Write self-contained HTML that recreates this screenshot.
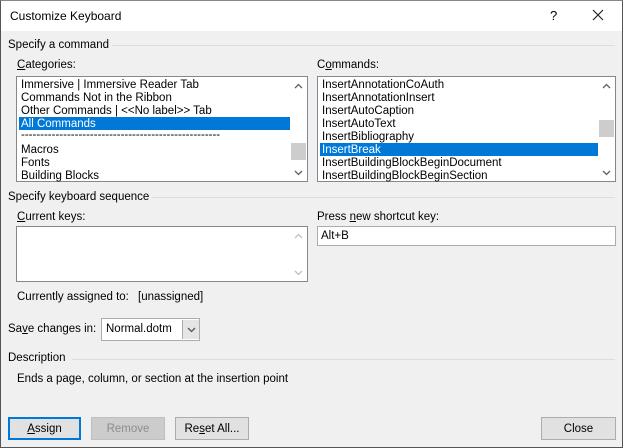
<!DOCTYPE html>
<html><head><style>
*{margin:0;padding:0;box-sizing:border-box}
body{width:623px;height:448px;overflow:hidden;background:#f0f0f0;font-family:"Liberation Sans",sans-serif;font-size:11.5px;color:#000;position:relative}
.a{position:absolute;white-space:nowrap}
.frame{position:absolute;left:0;top:0;width:623px;height:448px;border:1px solid #555;border-top-color:#888}
.title{position:absolute;left:1px;top:1px;width:621px;height:30px;background:#fff}
.lb{position:absolute;background:#fff;border:1px solid #828790}
.row{position:absolute;left:2px;height:13px;line-height:14px;padding-left:2px}
.sel{background:#0078d7;color:#fff}
.sb{position:absolute;right:0;top:0;bottom:0;width:17px;background:#fff}
.thumb{position:absolute;left:1px;width:15px;background:#cdcdcd}
.sb svg{position:absolute;left:4px}
.hr{position:absolute;height:1px;background:#dcdcdc}
.btn{position:absolute;top:417px;height:23px;border:1px solid #adadad;background:#e1e1e1;text-align:center;line-height:22px}
u{text-decoration:underline}
</style></head><body>
<div class="title"></div>
<div class="a" style="left:10px;top:9px;font-size:12px">Customize Keyboard</div>
<div class="a" style="left:550px;top:8px;font-size:13px">?</div>
<svg class="a" style="left:592px;top:9px" width="12" height="12"><path d="M1 1L11 11M11 1L1 11" stroke="#222" stroke-width="1.2"/></svg>

<div class="a" style="left:8px;top:39px">Specify a command</div>
<div class="hr" style="left:112px;top:45px;width:503px"></div>
<div class="a" style="left:17px;top:59px"><u>C</u>ategories:</div>
<div class="a" style="left:317px;top:59px">C<u>o</u>mmands:</div>

<div class="lb" style="left:16px;top:76px;width:292px;height:106px">
<div class="row" style="top:1px">Immersive | Immersive Reader Tab</div>
<div class="row" style="top:14px">Commands Not in the Ribbon</div>
<div class="row" style="top:27px">Other Commands | &lt;&lt;No label&gt;&gt; Tab</div>
<div class="row sel" style="top:40px;width:271px">All Commands</div>
<div class="row" style="top:51px">----------------------------------------------------</div>
<div class="row" style="top:66px">Macros</div>
<div class="row" style="top:79px">Fonts</div>
<div class="row" style="top:92px">Building Blocks</div>
<div class="sb"><svg style="top:6px" width="9" height="6"><path d="M1 5L4.5 1.5L8 5" fill="none" stroke="#606060" stroke-width="1.3"/></svg><div class="thumb" style="top:66px;height:17px"></div><svg style="top:93px" width="9" height="6"><path d="M1 1L4.5 4.5L8 1" fill="none" stroke="#606060" stroke-width="1.3"/></svg></div>
</div>

<div class="lb" style="left:317px;top:76px;width:299px;height:106px">
<div class="row" style="top:1px">InsertAnnotationCoAuth</div>
<div class="row" style="top:14px">InsertAnnotationInsert</div>
<div class="row" style="top:27px">InsertAutoCaption</div>
<div class="row" style="top:40px">InsertAutoText</div>
<div class="row" style="top:53px">InsertBibliography</div>
<div class="row sel" style="top:66px;width:278px">InsertBreak</div>
<div class="row" style="top:79px">InsertBuildingBlockBeginDocument</div>
<div class="row" style="top:92px">InsertBuildingBlockBeginSection</div>
<div class="sb"><svg style="top:6px" width="9" height="6"><path d="M1 5L4.5 1.5L8 5" fill="none" stroke="#606060" stroke-width="1.3"/></svg><div class="thumb" style="top:43px;height:17px"></div><svg style="top:93px" width="9" height="6"><path d="M1 1L4.5 4.5L8 1" fill="none" stroke="#606060" stroke-width="1.3"/></svg></div>
</div>

<div class="a" style="left:8px;top:191px">Specify keyboard sequence</div>
<div class="hr" style="left:152px;top:197px;width:463px"></div>
<div class="a" style="left:17px;top:211px"><u>C</u>urrent keys:</div>
<div class="lb" style="left:16px;top:226px;width:292px;height:56px">
<div class="sb"><svg style="top:6px" width="9" height="6"><path d="M1 5L4.5 1.5L8 5" fill="none" stroke="#c0c0c0" stroke-width="1.3"/></svg><svg style="top:43px" width="9" height="6"><path d="M1 1L4.5 4.5L8 1" fill="none" stroke="#c0c0c0" stroke-width="1.3"/></svg></div></div>
<div class="a" style="left:317px;top:211px">Press <u>n</u>ew shortcut key:</div>
<div class="lb" style="left:317px;top:226px;width:299px;height:20px;border-color:#acacac"><div class="a" style="left:3px;top:3px">Alt+B</div></div>

<div class="a" style="left:17px;top:291px">Currently assigned to:</div>
<div class="a" style="left:138px;top:291px">[unassigned]</div>

<div class="a" style="left:8px;top:323px">Sa<u>v</u>e changes in:</div>
<div class="lb" style="left:101px;top:318px;width:99px;height:23px;border-color:#acacac"><div class="a" style="left:4px;top:4px">Normal.dotm</div>
<div class="a" style="left:80px;top:1px;width:17px;height:19px;background:#e5e5e5;border-left:1px solid #acacac"><svg style="position:absolute;left:4px;top:7px" width="9" height="6"><path d="M1 1L4.5 4.5L8 1" fill="none" stroke="#555" stroke-width="1.3"/></svg></div></div>

<div class="a" style="left:8px;top:352px">Description</div>
<div class="hr" style="left:72px;top:359px;width:543px"></div>
<div class="a" style="left:17px;top:373px">Ends a page, column, or section at the insertion point</div>

<div class="btn" style="left:8px;width:73px;border:2px solid #0078d7;line-height:20px"><u>A</u>ssign</div>
<div class="btn" style="left:91px;width:74px;color:#8d8d8d;border-color:#bfbfbf;background:#ccc">Remove</div>
<div class="btn" style="left:175px;width:74px">Re<u>s</u>et All...</div>
<div class="btn" style="left:541px;width:75px">Close</div>
<div class="frame"></div>
</body></html>
